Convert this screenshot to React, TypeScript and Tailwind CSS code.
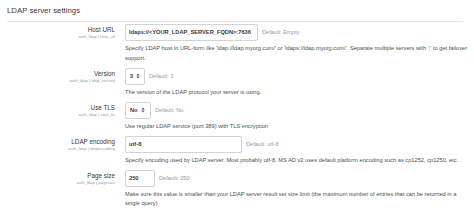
import React from 'react';

type Setting = {
  label: string;
  sub: string;
  control: React.ReactNode;
  def: string;
  desc: string;
};

// up/down arrows used by the custom selects
const SelectArrows = () => (
  <svg width="4" height="6" viewBox="0 0 4 6" className="ml-[3px]">
    <path d="M0.4 2.4 L2 0.6 L3.6 2.4 Z" fill="#495057" />
    <path d="M0.4 3.6 L2 5.4 L3.6 3.6 Z" fill="#495057" />
  </svg>
);

const TextInput = ({ value, width }: { value: string; width: string }) => (
  <div
    className={`${width} h-[17px] border border-[#ced4da] rounded-[2px] bg-white flex items-center px-[3px] text-[5.7px] font-semibold text-[#343a40] whitespace-nowrap overflow-hidden`}
  >
    {value}
  </div>
);

const Select = ({ value, width }: { value: string; width: string }) => (
  <div
    className={`${width} h-[17px] border border-[#ced4da] rounded-[2px] bg-white flex items-center pl-[4px] text-[5.7px] font-semibold text-[#343a40]`}
  >
    {value}
    <SelectArrows />
  </div>
);

const settings: Setting[] = [
  {
    label: 'Host URL',
    sub: 'auth_ldap | host_url',
    control: <TextInput value="ldaps://<YOUR_LDAP_SERVER_FQDN>:7636" width="w-[133px]" />,
    def: 'Default: Empty',
    desc: "Specify LDAP host in URL-form like 'ldap://ldap.myorg.com/' or 'ldaps://ldap.myorg.com/'. Separate multiple servers with ';' to get failover support.",
  },
  {
    label: 'Version',
    sub: 'auth_ldap | ldap_version',
    control: <Select value="3" width="w-[20px]" />,
    def: 'Default: 3',
    desc: 'The version of the LDAP protocol your server is using.',
  },
  {
    label: 'Use TLS',
    sub: 'auth_ldap | start_tls',
    control: <Select value="No" width="w-[26px]" />,
    def: 'Default: No',
    desc: 'Use regular LDAP service (port 389) with TLS encryption',
  },
  {
    label: 'LDAP encoding',
    sub: 'auth_ldap | ldapencoding',
    control: <TextInput value="utf-8" width="w-[117px]" />,
    def: 'Default: utf-8',
    desc: 'Specify encoding used by LDAP server. Most probably utf-8, MS AD v2 uses default platform encoding such as cp1252, cp1250, etc.',
  },
  {
    label: 'Page size',
    sub: 'auth_ldap | pagesize',
    control: <TextInput value="250" width="w-[30px]" />,
    def: 'Default: 250',
    desc: 'Make sure this value is smaller than your LDAP server result set size limit (the maximum number of entries that can be returned in a single query)',
  },
];

export default function App() {
  return (
    <div className="w-[474px] h-[210px] overflow-hidden bg-white pl-[7px] pr-[11px] font-['Liberation_Sans',Arial,sans-serif] text-[#1d2125]">
      <h3 className="text-[7.8px] leading-[12px] pt-[5px] pb-[4px] text-[#3a3a3a] border-b border-[#e6e8ea]">
        LDAP server settings
      </h3>
      <div className="pt-[2px]">
        {settings.map((s) => (
          <div key={s.label} className="grid grid-cols-[108px_1fr] gap-x-[10px] mb-[4.5px]">
            <div className="text-right pt-[2px]">
              <div className="text-[6.3px] leading-[8px] text-[#343a40]">{s.label}</div>
              <div className="text-[4.2px] leading-[5px] text-[#9a9fa4]">{s.sub}</div>
            </div>
            <div>
              <div className="flex items-center gap-[4px]">
                {s.control}
                <span className="text-[5.7px] text-[#959ba1]">{s.def}</span>
              </div>
              <p className="mt-[3px] w-[345px] text-[5.7px] leading-[9.5px] text-[#4a4f54]">{s.desc}</p>
            </div>
          </div>
        ))}
      </div>
    </div>
  );
}
